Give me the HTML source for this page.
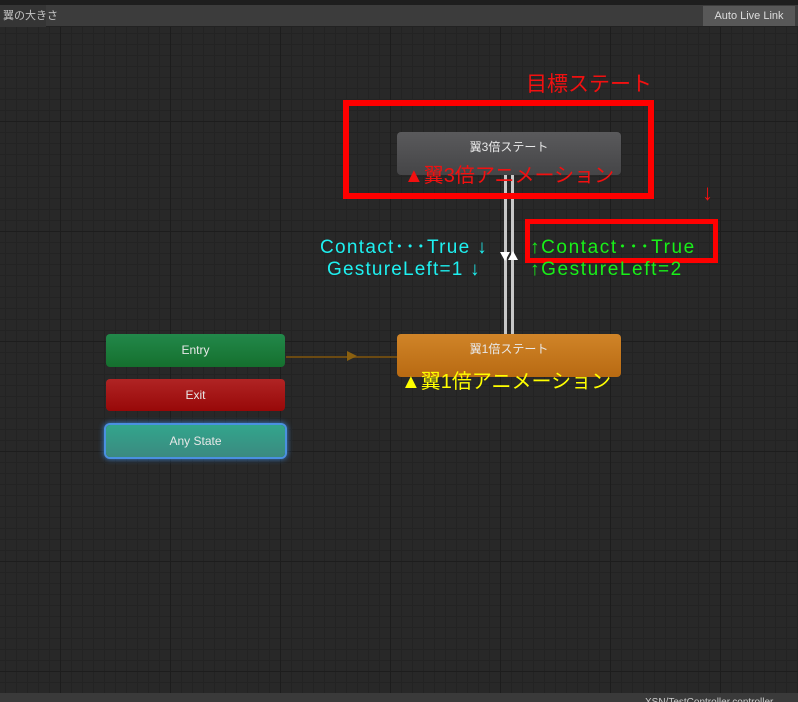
<!DOCTYPE html>
<html><head><meta charset="utf-8"><style>
*{margin:0;padding:0;box-sizing:border-box}
body{width:798px;height:702px;overflow:hidden;background:#282828;font-family:"Liberation Sans","Noto Sans CJK JP",sans-serif;position:relative}
.grid{position:absolute;left:0;top:27px;width:798px;height:666px;
background-image:
linear-gradient(#1d1d1d 1px,transparent 1px),
linear-gradient(90deg,#1d1d1d 1px,transparent 1px),
linear-gradient(#232323 1px,transparent 1px),
linear-gradient(90deg,#232323 1px,transparent 1px);
background-size:110px 110px,110px 110px,11px 11px,11px 11px;
background-position:0 94px,60px 0,0 6px,5px 0}
.top{position:absolute;left:0;top:0;width:798px;height:5px;background:#1e1e1e}
.tab{position:absolute;left:0;top:5px;width:798px;height:22px;background:#3c3c3c;border-bottom:1px solid #222}
.crumb{position:absolute;left:0;top:5px;height:22px;width:46px;background:#353535;color:#c4c4c4;font-size:11px;line-height:22px;padding-left:3px;white-space:nowrap}
.auto{position:absolute;left:703px;top:6px;width:92px;height:20px;background:#585858;color:#ddd;font-size:11px;line-height:20px;text-align:center;white-space:nowrap}
.bot{position:absolute;left:0;top:693px;width:798px;height:9px;background:#3a3a3a;color:#ccc;font-size:10px;overflow:hidden}
.node{position:absolute;border-radius:4px;color:#e8e8e8;font-size:12px;text-align:center}
.abs{position:absolute;white-space:nowrap}
</style></head><body>
<div class="grid"></div>
<div class="top"></div>
<div class="tab"></div>
<div class="crumb">翼の大きさ</div>
<div class="auto">Auto Live Link</div>
<div class="bot"><span class="abs" style="left:645px;top:4px">XSN/TestController.controller</span></div>

<div class="abs" style="left:286px;top:356px;width:112px;height:2px;background:#6b4a12"></div>
<div class="abs" style="left:347px;top:351px;width:0;height:0;border-left:10px solid #8a6010;border-top:5px solid transparent;border-bottom:5px solid transparent"></div>

<div class="abs" style="left:504px;top:175px;width:3px;height:160px;background:#c8c8c8"></div>
<div class="abs" style="left:511px;top:175px;width:3px;height:160px;background:#c8c8c8"></div>
<div class="abs" style="left:500px;top:252px;border-top:9px solid #fff;border-left:5px solid transparent;border-right:5px solid transparent"></div>
<div class="abs" style="left:508px;top:251px;border-bottom:9px solid #fff;border-left:5px solid transparent;border-right:5px solid transparent"></div>

<div class="node" style="left:397px;top:132px;width:224px;height:43px;background:linear-gradient(#5a5a5c,#454547);line-height:30px">翼3倍ステート</div>
<div class="node" style="left:397px;top:334px;width:224px;height:43px;background:linear-gradient(#d08428,#b86a12);line-height:30px">翼1倍ステート</div>
<div class="node" style="left:106px;top:334px;width:179px;height:33px;background:linear-gradient(#22884a,#15702e);line-height:32px">Entry</div>
<div class="node" style="left:106px;top:379px;width:179px;height:32px;background:linear-gradient(#b02424,#980808);line-height:32px">Exit</div>
<div class="node" style="left:106px;top:425px;width:179px;height:32px;background:linear-gradient(#32a58c,#3b8a80);line-height:32px;box-shadow:0 0 0 2px #4a90e0,0 0 6px 2px #3a80d0">Any State</div>

<div class="abs" style="left:343px;top:100px;width:311px;height:99px;border:6px solid #f00"></div>
<div class="abs" style="left:525px;top:219px;width:193px;height:44px;border:5px solid #f00"></div>

<div class="abs" style="left:526px;top:68px;color:#f21010;font-size:21px">目標ステート</div>
<div class="abs" style="left:702px;top:180px;color:#f21010;font-size:22px">↓</div>
<div class="abs" style="left:404px;top:159px;color:#f21010;font-size:20px">▲翼3倍アニメーション</div>
<div class="abs" style="left:401px;top:365px;color:#ffff00;font-size:20px">▲翼1倍アニメーション</div>
<div class="abs" style="left:320px;top:232px;color:#1ef0f0;font-size:19px;letter-spacing:1.3px">Contact･･･True ↓</div>
<div class="abs" style="left:327px;top:259px;color:#1ef0f0;font-size:19px;letter-spacing:1.2px">GestureLeft=1 ↓</div>
<div class="abs" style="left:530px;top:232px;color:#18f018;font-size:19px;letter-spacing:1.6px">↑Contact･･･True</div>
<div class="abs" style="left:530px;top:259px;color:#18f018;font-size:19px;letter-spacing:1.6px">↑GestureLeft=2</div>
</body></html>
